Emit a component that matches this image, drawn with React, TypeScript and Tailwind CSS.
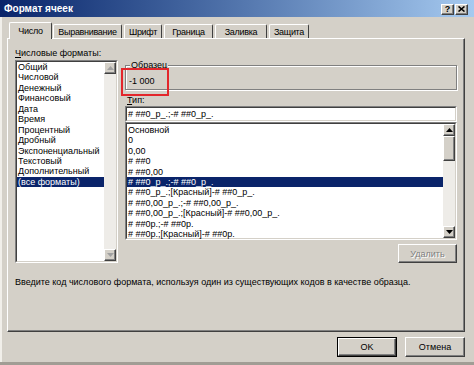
import React from "react";

const raised =
  "border border-t-white border-l-white border-r-[#404040] border-b-[#404040] shadow-[inset_-1px_-1px_0_#808080]";

const leftItems = [
  "Общий",
  "Числовой",
  "Денежный",
  "Финансовый",
  "Дата",
  "Время",
  "Процентный",
  "Дробный",
  "Экспоненциальный",
  "Текстовый",
  "Дополнительный",
  "(все форматы)",
];

const typeItems = [
  "Основной",
  "0",
  "0,00",
  "# ##0",
  "# ##0,00",
  "# ##0_р_.;-# ##0_р_.",
  "# ##0_р_.;[Красный]-# ##0_р_.",
  "# ##0,00_р_.;-# ##0,00_р_.",
  "# ##0,00_р_.;[Красный]-# ##0,00_р_.",
  "# ##0р.;-# ##0р.",
  "# ##0р.;[Красный]-# ##0р.",
];

function Arrow({ up, disabled }: { up?: boolean; disabled?: boolean }) {
  const fill = disabled ? "#a0a0a0" : "#000";
  return (
    <svg width="7" height="4" viewBox="0 0 7 4">
      {up ? (
        <polygon points="0,4 7,4 3.5,0" fill={fill} />
      ) : (
        <polygon points="0,0 7,0 3.5,4" fill={fill} />
      )}
    </svg>
  );
}

function ScrollBtn({ up, disabled }: { up?: boolean; disabled?: boolean }) {
  return (
    <div className={`h-[12px] w-full bg-[#d4d0c8] flex items-center justify-center ${raised}`}>
      <Arrow up={up} disabled={disabled} />
    </div>
  );
}

function Sunken({ className, children }: { className?: string; children: React.ReactNode }) {
  return (
    <div className={`border border-t-[#808080] border-l-[#808080] border-r-white border-b-white ${className ?? ""}`}>
      <div className="h-full border border-t-[#404040] border-l-[#404040] border-r-[#d4d0c8] border-b-[#d4d0c8] bg-white flex">
        {children}
      </div>
    </div>
  );
}

const tabBase =
  "bg-[#d4d0c8] border-t border-l border-t-white border-l-white border-r border-r-[#404040] rounded-t-[2px] flex items-center justify-center tracking-[-0.3px] whitespace-nowrap";

export default function App() {
  return (
    <div className="w-[474px] h-[365px] bg-[#d4d0c8] flex flex-col font-['Liberation_Sans',Arial,sans-serif] text-[9px] leading-[12px] text-black overflow-hidden border-b-[3px] border-b-[#a19d95]">
      <div className="h-[17px] shrink-0 bg-linear-to-r from-[#0a246a] to-[#a6caf0] flex items-center pl-[4px] pr-[6px]">
        <span className="text-white font-bold text-[10px]">Формат ячеек</span>
        <div className="ml-auto flex gap-[1px] mt-[1px]">
          <div className={`w-[13px] h-[11px] bg-[#d4d0c8] flex items-center justify-center font-bold text-[9px] leading-none ${raised}`}>
            ?
          </div>
          <div className={`w-[13px] h-[11px] bg-[#d4d0c8] flex items-center justify-center ${raised}`}>
            <svg width="7" height="6" viewBox="0 0 7 6">
              <path d="M0.5 0.5 L6.5 5.5 M6.5 0.5 L0.5 5.5" stroke="#000" strokeWidth="1.6" />
            </svg>
          </div>
        </div>
      </div>

      <div className="flex-1 flex border-l-2 border-l-[#f1efea]">
        <div className="flex flex-col pl-[5px] pt-[4px]">
          <div className="flex items-end h-[17px] pl-[2px]">
            <div className={`relative z-10 -mb-px h-[17px] w-[43px] ${tabBase}`}>Число</div>
            <div className={`h-[14px] w-[69px] ml-[1px] ${tabBase}`}>Выравнивание</div>
            <div className={`h-[14px] w-[38px] ml-[2px] ${tabBase}`}>Шрифт</div>
            <div className={`h-[14px] w-[49px] ml-[2px] ${tabBase}`}>Граница</div>
            <div className={`h-[14px] w-[52px] ml-[2px] ${tabBase}`}>Заливка</div>
            <div className={`h-[14px] w-[40px] ml-[2px] ${tabBase}`}>Защита</div>
          </div>

          <div className="w-[458px] h-[294px] border border-t-white border-l-white border-r-[#404040] border-b-[#404040] shadow-[inset_-1px_-1px_0_#808080]">
            <div className="flex pt-[8px] pl-[7px]">
              <div className="w-[103px] flex flex-col">
                <div className="h-[12px]">
                  <span className="underline">Ч</span>исловые форматы:
                </div>
                <Sunken className="mt-[1px] h-[203px]">
                  <div className="flex-1">
                    {leftItems.map((it, i) => (
                      <div
                        key={it}
                        className={`h-[10.45px] leading-[10.45px] pl-[1px] whitespace-nowrap ${
                          i === leftItems.length - 1 ? "bg-[#0a246a] text-white" : ""
                        }`}
                      >
                        {it}
                      </div>
                    ))}
                  </div>
                  <div className="w-[12px] bg-[#eeece8] flex flex-col justify-between">
                    <ScrollBtn up disabled />
                    <ScrollBtn disabled />
                  </div>
                </Sunken>
              </div>

              <div className="relative w-[332px] ml-[7px] pt-[18px] flex flex-col">
                <div className="relative h-[25px] border border-[#808080] shadow-[inset_1px_1px_0_#fff,1px_1px_0_#fff] pl-[3px] pt-[9px]">
                  <span className="absolute -top-[7px] left-[4px] px-[1px] bg-[#d4d0c8]">Образец</span>
                  -1 000
                </div>
                <div className="absolute left-[-4px] top-[21px] w-[48px] h-[28px] border-2 border-[#e3262b]" />

                <div className="mt-[4px] h-[12px] pl-[2px]">
                  <span className="underline">Т</span>ип:
                </div>
                <Sunken className="h-[16px]">
                  <div className="pl-[1px] leading-[12px] whitespace-nowrap">
                    # ##0_р_.;-# ##0_р_.
                  </div>
                </Sunken>
                <Sunken className="h-[118px]">
                  <div className="flex-1 pt-[1px]">
                    {typeItems.map((it, i) => (
                      <div
                        key={it}
                        className={`h-[10.4px] leading-[10.4px] pl-[1px] whitespace-nowrap ${
                          i === 5 ? "bg-[#0a246a] text-white" : ""
                        }`}
                      >
                        {it}
                      </div>
                    ))}
                  </div>
                  <div className="w-[12px] bg-[#eeece8] flex flex-col">
                    <ScrollBtn up />
                    <div className={`h-[25px] bg-[#d4d0c8] ${raised}`} />
                    <div className="flex-1" />
                    <ScrollBtn />
                  </div>
                </Sunken>
                <div className="mt-[4px] flex justify-end">
                  <div
                    className={`w-[59px] h-[19px] flex items-center justify-center text-[#808080] [text-shadow:1px_1px_0_#fff] ${raised}`}
                  >
                    Удалить
                  </div>
                </div>
              </div>
            </div>
            <div className="mt-[13px] pl-[7px] whitespace-nowrap">
              Введите код числового формата, используя один из существующих кодов в качестве образца.
            </div>
          </div>

          <div className="mt-[5px] flex justify-end gap-[8px]">
            <div className="w-[60px] h-[20px] border border-black">
              <div className={`h-full flex items-center justify-center ${raised}`}>OK</div>
            </div>
            <div className={`w-[60px] h-[20px] flex items-center justify-center ${raised}`}>
              Отмена
            </div>
          </div>
        </div>
      </div>
    </div>
  );
}
